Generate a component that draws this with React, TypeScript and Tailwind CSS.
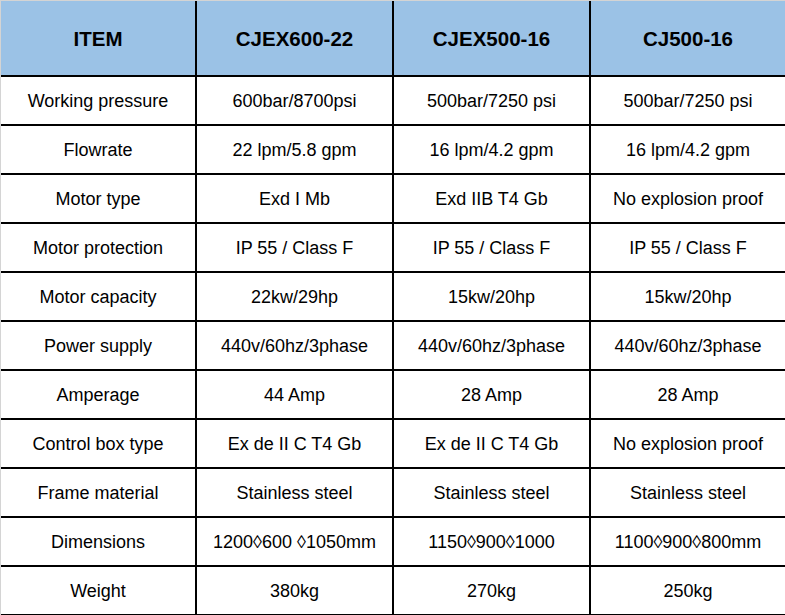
import React from "react";

const headers = ["ITEM", "CJEX600-22", "CJEX500-16", "CJ500-16"];

const rows: string[][] = [
  ["Working pressure", "600bar/8700psi", "500bar/7250 psi", "500bar/7250 psi"],
  ["Flowrate", "22 lpm/5.8 gpm", "16 lpm/4.2 gpm", "16 lpm/4.2 gpm"],
  ["Motor type", "Exd I Mb", "Exd IIB T4 Gb", "No explosion proof"],
  ["Motor protection", "IP 55 / Class F", "IP 55 / Class F", "IP 55 / Class F"],
  ["Motor capacity", "22kw/29hp", "15kw/20hp", "15kw/20hp"],
  ["Power supply", "440v/60hz/3phase", "440v/60hz/3phase", "440v/60hz/3phase"],
  ["Amperage", "44 Amp", "28 Amp", "28 Amp"],
  ["Control box type", "Ex de II C T4 Gb", "Ex de II C T4 Gb", "No explosion proof"],
  ["Frame material", "Stainless steel", "Stainless steel", "Stainless steel"],
  ["Dimensions", "1200◊600 ◊1050mm", "1150◊900◊1000", "1100◊900◊800mm"],
  ["Weight", "380kg", "270kg", "250kg"],
];

function App() {
  return (
    <div className="w-[785px] h-[615px] overflow-hidden bg-[#d4d4d4] pt-px pl-px font-['Liberation_Sans',Arial,sans-serif] text-black">
      <div className="grid grid-cols-[194px_195px_195px_1fr] grid-rows-[74px_repeat(11,47px)] gap-[2px] bg-black pb-[2px]">
        {headers.map((h) => (
          <div
            key={h}
            className="bg-[#9bc2e6] flex items-center justify-center pt-[2px] text-[20.5px] font-bold"
          >
            {h}
          </div>
        ))}
        {rows.map((r) =>
          r.map((c, i) => (
            <div
              key={r[0] + i}
              className="bg-white flex items-center justify-center pt-[2px] text-[18px]"
            >
              {c}
            </div>
          ))
        )}
      </div>
    </div>
  );
}

export default App;
